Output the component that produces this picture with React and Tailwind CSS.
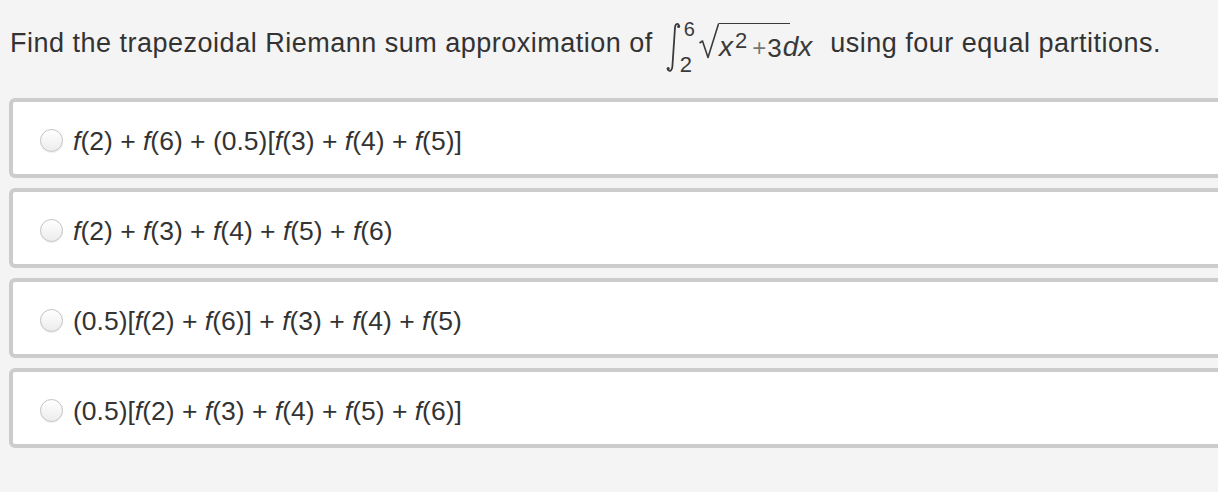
import React from "react";

const F = () => <i>f</i>;

function Radio() {
  return (
    <span className="inline-block w-[23px] h-[23px] mt-[4px] rounded-full border border-[#c2c2c2] bg-gradient-to-b from-[#ffffff] to-[#ececec] shadow-[0_1px_1px_rgba(0,0,0,0.06)] shrink-0" />
  );
}

function Option({ children }) {
  return (
    <div className="h-[80px] w-[1240px] ml-[9px] border-4 border-[#cccccc] rounded-[6px] bg-white flex items-center pl-[27px]">
      <Radio />
      <span className="ml-[10px] mt-[6px] text-[26.5px] leading-none text-[#333333] whitespace-nowrap">{children}</span>
    </div>
  );
}

function Integral() {
  return (
    <span className="flex items-start tracking-normal">
      <svg className="ml-[13px] mt-[22px] shrink-0" width="15" height="51" viewBox="0 0 15 51">
        <path d="M13.2 4.2 C12.6 1.2 9.6 0.8 9 5.5 L6.4 44.5 C5.9 49.6 2.6 50 1.6 47" fill="none" stroke="#3a3a3a" strokeWidth="1.8" strokeLinecap="round" />
        <circle cx="12.6" cy="4.4" r="1.5" fill="#3a3a3a" />
        <circle cx="2.2" cy="46.6" r="1.5" fill="#3a3a3a" />
      </svg>
      <span className="flex flex-col items-start mt-[19px] ml-[-1px] text-[#3a3a3a]">
        <span className="text-[20px] leading-none h-[20px] ml-[4px]">6</span>
        <span className="text-[22px] leading-none mt-[15px]">2</span>
      </span>
      <svg className="ml-[4px] mt-[23px] shrink-0" width="20" height="36" viewBox="0 0 20 36">
        <path d="M0.5 20 L3.5 18 L9 34.5 L19.5 1 L20 1" fill="none" stroke="#3a3a3a" strokeWidth="1.6" strokeLinejoin="round" />
      </svg>
      <span className="flex items-start mt-[23px] border-t-[1.6px] border-[#3a3a3a] pt-[9px] pr-[8px] text-[#3a3a3a]">
        <i className="text-[28px] leading-none">x</i>
        <span className="text-[22px] leading-none ml-[2px] mt-[-3px]">2</span>
        <span className="text-[24px] leading-none ml-[5px] mt-[3px] text-[#777777]">+</span>
        <span className="text-[26px] leading-none ml-[1px] mt-[2px]">3</span>
      </span>
      <i className="text-[28px] leading-none mt-[33px] ml-[-7px] text-[#3a3a3a]">dx</i>
    </span>
  );
}

export default function App() {
  return (
    <div
      className="w-[1218px] h-[492px] overflow-hidden bg-[#f4f4f4]"
      style={{ fontFamily: '"Liberation Sans", Arial, sans-serif' }}
    >
      <div className="h-[98px] flex items-start pl-[10px] text-[27px] tracking-[0.5px] text-[#333333] whitespace-nowrap">
        <span className="mt-[29.5px] leading-none">Find the trapezoidal Riemann sum approximation of</span>
        <Integral />
        <span className="mt-[29.5px] ml-[18px] leading-none">using four equal partitions.</span>
      </div>
      <div className="flex flex-col gap-[10px]">
        <Option>
          <F />(2) + <F />(6) + (0.5)[<F />(3) + <F />(4) + <F />(5)]
        </Option>
        <Option>
          <F />(2) + <F />(3) + <F />(4) + <F />(5) + <F />(6)
        </Option>
        <Option>
          (0.5)[<F />(2) + <F />(6)] + <F />(3) + <F />(4) + <F />(5)
        </Option>
        <Option>
          (0.5)[<F />(2) + <F />(3) + <F />(4) + <F />(5) + <F />(6)]
        </Option>
      </div>
    </div>
  );
}
